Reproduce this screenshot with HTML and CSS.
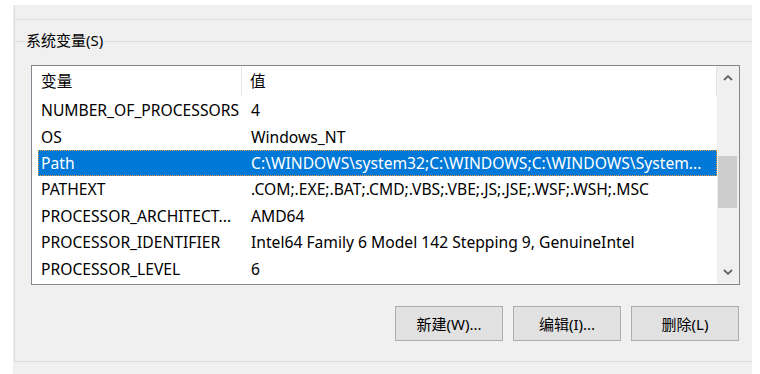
FILE: index.html
```html
<!DOCTYPE html>
<html lang="zh-CN">
<head>
<meta charset="utf-8">
<title>系统变量</title>
<link rel="stylesheet" href="styles.css">
</head>
<body>
<div class="panel">
  <div class="frame">
    <div class="upper"></div>
    <div class="group">
      <span class="legend">系统变量(S)</span>
      <div class="listview">
        <div class="table">
          <div class="header">
            <div class="hcell c1">变量</div>
            <div class="hcell c2">值</div>
          </div>
          <div class="row"><div class="cell c1">NUMBER_OF_PROCESSORS</div><div class="cell c2">4</div></div>
          <div class="row"><div class="cell c1">OS</div><div class="cell c2">Windows_NT</div></div>
          <div class="row selected"><div class="cell c1">Path</div><div class="cell c2">C:\WINDOWS\system32;C:\WINDOWS;C:\WINDOWS\System...</div></div>
          <div class="row"><div class="cell c1">PATHEXT</div><div class="cell c2">.COM;.EXE;.BAT;.CMD;.VBS;.VBE;.JS;.JSE;.WSF;.WSH;.MSC</div></div>
          <div class="row"><div class="cell c1">PROCESSOR_ARCHITECT...</div><div class="cell c2">AMD64</div></div>
          <div class="row"><div class="cell c1">PROCESSOR_IDENTIFIER</div><div class="cell c2">Intel64 Family 6 Model 142 Stepping 9, GenuineIntel</div></div>
          <div class="row"><div class="cell c1">PROCESSOR_LEVEL</div><div class="cell c2">6</div></div>
        </div>
        <div class="scrollbar">
          <div class="sb-btn">
            <svg width="10" height="6" viewBox="0 0 10 6"><path d="M1 5 L5 1.2 L9 5" fill="none" stroke="#606060" stroke-width="1.8"/></svg>
          </div>
          <div class="sb-track"><div class="sb-thumb"></div></div>
          <div class="sb-btn">
            <svg width="10" height="6" viewBox="0 0 10 6"><path d="M1 1 L5 4.8 L9 1" fill="none" stroke="#606060" stroke-width="1.8"/></svg>
          </div>
        </div>
      </div>
      <div class="buttons">
        <button class="btn">新建(W)...</button>
        <button class="btn">编辑(I)...</button>
        <button class="btn">删除(L)</button>
      </div>
    </div>
  </div>
</div>
</body>
</html>
```
FILE: styles.css
```css
html, body {
  margin: 0;
  padding: 0;
  background: #ffffff;
}
body {
  font-family: "Noto Sans", "Noto Sans CJK SC", sans-serif;
  font-size: 15.65px;
  color: #000;
}
.panel {
  margin-left: 13px;
  margin-top: 5px;
  width: 739px;
  height: 369px;
  background: #f0f0f0;
  overflow: hidden;
  padding-left: 1px;
  box-sizing: border-box;
}
.frame {
  width: 760px;
  height: 357px;
  box-sizing: border-box;
  border-left: 1px solid #dcdcdc;
  border-bottom: 1px solid #dcdcdc;
}
.upper {
  height: 14px;
  border-bottom: 1px solid #dcdcdc;
}
.group {
  position: relative;
  margin-top: 21px;
  border-top: 1px solid #dcdcdc;
}
.legend {
  position: absolute;
  left: 10px;
  top: -12px;
  line-height: 20px;
  padding: 0 1px;
  background: #f0f0f0;
  font-size: 15px;
}
.listview {
  margin-left: 16px;
  margin-top: 23px;
  width: 709px;
  height: 220px;
  box-sizing: border-box;
  border: 1px solid #828790;
  background: #fff;
  display: flex;
  overflow: hidden;
}
.table {
  flex: 1;
  padding-left: 6px;
  overflow: hidden;
}
.header {
  display: flex;
  height: 31px;
  align-items: stretch;
}
.hcell {
  display: flex;
  align-items: center;
  padding-bottom: 2px;
  box-sizing: border-box;
}
.hcell.c1 {
  width: 204px;
  flex: none;
  padding-left: 3px;
  border-right: 1px solid #e5e5e5;
  margin-top: 1px;
  margin-bottom: 1px;
}
.hcell.c2 {
  flex: 1;
  padding-left: 8px;
  border-right: 1px solid #e5e5e5;
  margin-top: 1px;
  margin-bottom: 1px;
}
.row {
  display: flex;
  height: 26.4px;
  align-items: center;
  white-space: nowrap;
  box-sizing: border-box;
}
.cell.c1 {
  width: 204px;
  flex: none;
  padding-left: 3px;
  box-sizing: border-box;
  overflow: hidden;
}
.cell.c2 {
  flex: 1;
  padding-left: 9px;
  overflow: hidden;
}
.row.selected {
  background: #0078d7;
  color: #ffffff;
  outline: 1px dotted #e0963c;
  outline-offset: -1px;
}
.scrollbar {
  width: 22px;
  flex: none;
  background: #f0f0f0;
  display: flex;
  flex-direction: column;
}
.sb-btn {
  height: 24px;
  display: flex;
  align-items: center;
  justify-content: center;
  padding-right: 1px;
}
.sb-track {
  flex: 1;
  padding-top: 66px;
}
.sb-thumb {
  margin-left: 1px;
  width: 19px;
  height: 52px;
  background: #cdcdcd;
}
.buttons {
  width: 724px;
  margin-top: 21px;
  display: flex;
  justify-content: flex-end;
  gap: 10px;
}
.btn {
  width: 108px;
  height: 35px;
  box-sizing: border-box;
  border: 1px solid #adadad;
  background: #e1e1e1;
  font-family: "Noto Sans", "Noto Sans CJK SC", sans-serif;
  font-size: 15px;
  color: #000;
  padding: 0;
  margin: 0;
}
```
